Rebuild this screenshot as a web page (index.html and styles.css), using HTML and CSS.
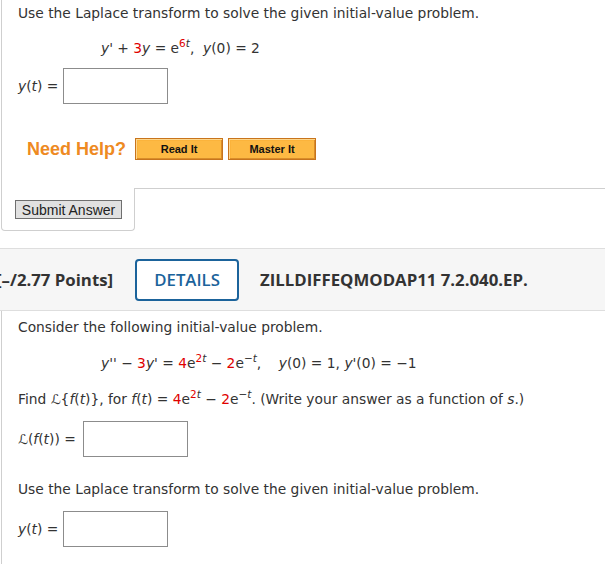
FILE: index.html
```html
<!DOCTYPE html>
<html lang="en">
<head>
  <meta charset="UTF-8" />
  <title>Laplace Transform - Question</title>
  <link rel="stylesheet" href="styles.css">
</head>
<body>
  <div class="question">
    <p class="prompt">Use the Laplace transform to solve the given initial-value problem.</p>
    <p class="eqn"><i>y</i>' + <span class="red">3</span><i>y</i> = e<sup><span class="red">6</span><i>t</i></sup>, &nbsp;<i>y</i>(0) = 2</p>
    <div class="answer-row">
      <span class="answer-label"><i>y</i>(<i>t</i>) =</span>
      <input type="text" class="answer-box" />
    </div>
    <div class="help-row">
      <span class="need-help">Need Help?</span>
      <button class="help-btn">Read It</button>
      <button class="help-btn">Master It</button>
    </div>
  </div>

  <div class="submit-row">
    <div class="submit-tab">
      <button class="submit-btn">Submit Answer</button>
    </div>
    <div class="submit-filler"></div>
  </div>

  <div class="q-header">
    <span class="points">[&ndash;/2.77 Points]</span>
    <button class="details-btn">DETAILS</button>
    <span class="q-code">ZILLDIFFEQMODAP11 7.2.040.EP.</span>
  </div>

  <div class="question body">
    <p class="prompt">Consider the following initial-value problem.</p>
    <p class="eqn"><i>y</i>'' &minus; <span class="red">3</span><i>y</i>' = <span class="red">4</span>e<sup><span class="red">2</span><i>t</i></sup> &minus; <span class="red">2</span>e<sup>&minus;<i>t</i></sup>, &nbsp;&nbsp; <i>y</i>(0) = 1, <i>y</i>'(0) = &minus;1</p>
    <p class="prompt">Find &Lscr;{<i>f</i>(<i>t</i>)}, for <i>f</i>(<i>t</i>) = <span class="red">4</span>e<sup><span class="red">2</span><i>t</i></sup> &minus; <span class="red">2</span>e<sup>&minus;<i>t</i></sup>. (Write your answer as a function of <i>s</i>.)</p>
    <div class="answer-row">
      <span class="answer-label laplace">&Lscr;(<i>f</i>(<i>t</i>)) =</span>
      <input type="text" class="answer-box" />
    </div>
    <p class="prompt second">Use the Laplace transform to solve the given initial-value problem.</p>
    <div class="answer-row">
      <span class="answer-label"><i>y</i>(<i>t</i>) =</span>
      <input type="text" class="answer-box" />
    </div>
  </div>
  <div class="page-bottom">
    <div class="bottom-light"></div>
    <div class="bottom-dark"></div>
  </div>
</body>
</html>
```

FILE: styles.css
```css
:root {
  --text: #333;
  --red: #e00000;
  --line: #cfcfcf;
  --orange: #ee8a22;
  --blue: #1b639b;
}
body {
  margin: 0;
  font-family: 'DejaVu Sans', Verdana, sans-serif;
  font-size: 13.8px;
  color: var(--text);
  background: #fff;
  overflow: hidden;
}
p {
  margin: 0;
}
.red {
  color: var(--red);
}
sup {
  font-size: 10.5px;
  line-height: 0;
  vertical-align: 6px;
}
.question {
  margin-left: 1px;
  border-left: 1px solid var(--line);
  padding: 5px 16px 0;
}
.prompt {
  line-height: 16px;
}
.eqn {
  margin-top: 19px;
  padding-left: 83px;
  line-height: 16px;
}
.answer-row {
  display: flex;
  align-items: center;
  gap: 5px;
  margin-top: 12px;
}
.answer-label {
  line-height: 16px;
}
.answer-label.laplace {
  margin-right: 2px;
}
.answer-box {
  width: 105px;
  height: 36px;
  box-sizing: border-box;
  border: 1px solid #8c8c8c;
  margin: 0;
  padding: 0;
}
.help-row {
  display: flex;
  align-items: center;
  gap: 5px;
  margin-top: 34px;
  padding-left: 9px;
  padding-bottom: 28px;
}
.need-help {
  font-family: 'Liberation Sans', Arial, sans-serif;
  font-weight: bold;
  font-size: 18px;
  color: var(--orange);
  margin-right: 4px;
}
.help-btn {
  width: 88px;
  height: 22px;
  font-family: 'Liberation Sans', Arial, sans-serif;
  font-weight: bold;
  font-size: 11px;
  color: #111;
  background: #fdb943;
  border: 1px solid #c8741c;
  box-shadow: inset 1px 1px 0 #fdd68c, inset -1px -1px 0 #d98d2a, inset 2px 2px 0 #fbb33b;
  padding: 0;
  margin: 0;
}
.submit-row {
  display: flex;
  margin-left: 1px;
}
.submit-tab {
  width: 134px;
  height: 43px;
  box-sizing: border-box;
  border-left: 1px solid var(--line);
  border-right: 1px solid var(--line);
  border-bottom: 1px solid var(--line);
  border-radius: 0 0 4px 4px;
  padding: 12px 0 0 13px;
}
.submit-btn {
  width: 107px;
  height: 19px;
  font-family: 'Liberation Sans', Arial, sans-serif;
  font-size: 14px;
  color: #222;
  background: #e1e1e1;
  border: 1px solid #6f6f6f;
  padding: 0;
  margin: 0;
  line-height: 16px;
}
.submit-filler {
  flex: 1;
  border-top: 1px solid var(--line);
}
.q-header {
  display: flex;
  align-items: center;
  margin-top: 17px;
  height: 61px;
  border-top: 1px solid #dedede;
  border-bottom: 1px solid #dedede;
  background: #f6f6f6;
  font-family: 'Open Sans', sans-serif;
  font-weight: bold;
  font-size: 16.8px;
  color: #333;
  white-space: nowrap;
}
.points {
  margin-left: -4px;
}
.details-btn {
  width: 104px;
  height: 42px;
  margin: 0 21px 0 22px;
  padding: 0;
  background: #fff;
  border: 2px solid var(--blue);
  border-radius: 4px;
  font-family: 'Open Sans', sans-serif;
  font-weight: 600;
  font-size: 16.8px;
  color: var(--blue);
}
.question.body {
  padding-top: 8px;
  padding-bottom: 18px;
}
.body .eqn {
  margin-top: 20px;
}
.body .eqn + .prompt {
  margin-top: 20px;
}
.body .prompt + .answer-row {
  margin-top: 14px;
}
.prompt.second {
  margin-top: 24px;
}
.page-bottom {
  display: flex;
  height: 1px;
}
.bottom-light {
  width: 313px;
  background: var(--line);
}
.bottom-dark {
  flex: 1;
  background: #222;
}
```
